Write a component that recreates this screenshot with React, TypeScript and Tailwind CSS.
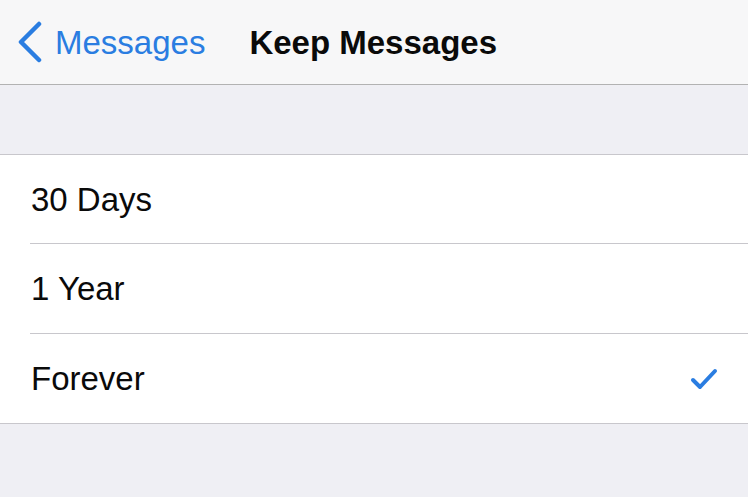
import { Fragment } from "react";

const options = ["30 Days", "1 Year", "Forever"];
const selected = "Forever";

export default function App() {
  return (
    <div
      className="w-[748px] h-[497px] overflow-hidden bg-[#efeff4] text-[#0a0a0a]"
      style={{ fontFamily: '"Liberation Sans", Arial, sans-serif' }}
    >
      {/* nav bar */}
      <div className="h-[85px] bg-[#f7f7f8] border-b border-[#b2b2b2] flex items-center">
        <div className="flex items-center pl-[16px] text-[#2a7de1]">
          <svg width="28" height="42" viewBox="0 0 28 42" className="mr-[11px]">
            <path
              d="M23 3 L5 21 L23 39"
              fill="none"
              stroke="currentColor"
              strokeWidth="4.5"
              strokeLinecap="round"
              strokeLinejoin="round"
            />
          </svg>
          <span className="text-[33px] leading-none">Messages</span>
        </div>
        <span className="ml-[44px] text-[33px] leading-none font-bold">Keep Messages</span>
      </div>

      <div className="h-[69px]" />

      {/* options */}
      <div className="bg-white border-y border-[#c8c7cc]">
        {options.map((opt, i) => (
          <Fragment key={opt}>
            {i > 0 && <div className="ml-[30px] h-px bg-[#c8c7cc]" />}
            <div className={`${i === 0 ? "h-[88px]" : "h-[89px]"} flex items-center pl-[31px] pr-[30px]`}>
              <span className="flex-1 text-[33px] leading-none">{opt}</span>
              {opt === selected && (
                <svg width="28" height="22" viewBox="0 0 28 22">
                  <path
                    d="M3 12 L10 19 L25 3"
                    fill="none"
                    stroke="#2a7de1"
                    strokeWidth="4"
                    strokeLinecap="round"
                    strokeLinejoin="round"
                  />
                </svg>
              )}
            </div>
          </Fragment>
        ))}
      </div>
    </div>
  );
}
